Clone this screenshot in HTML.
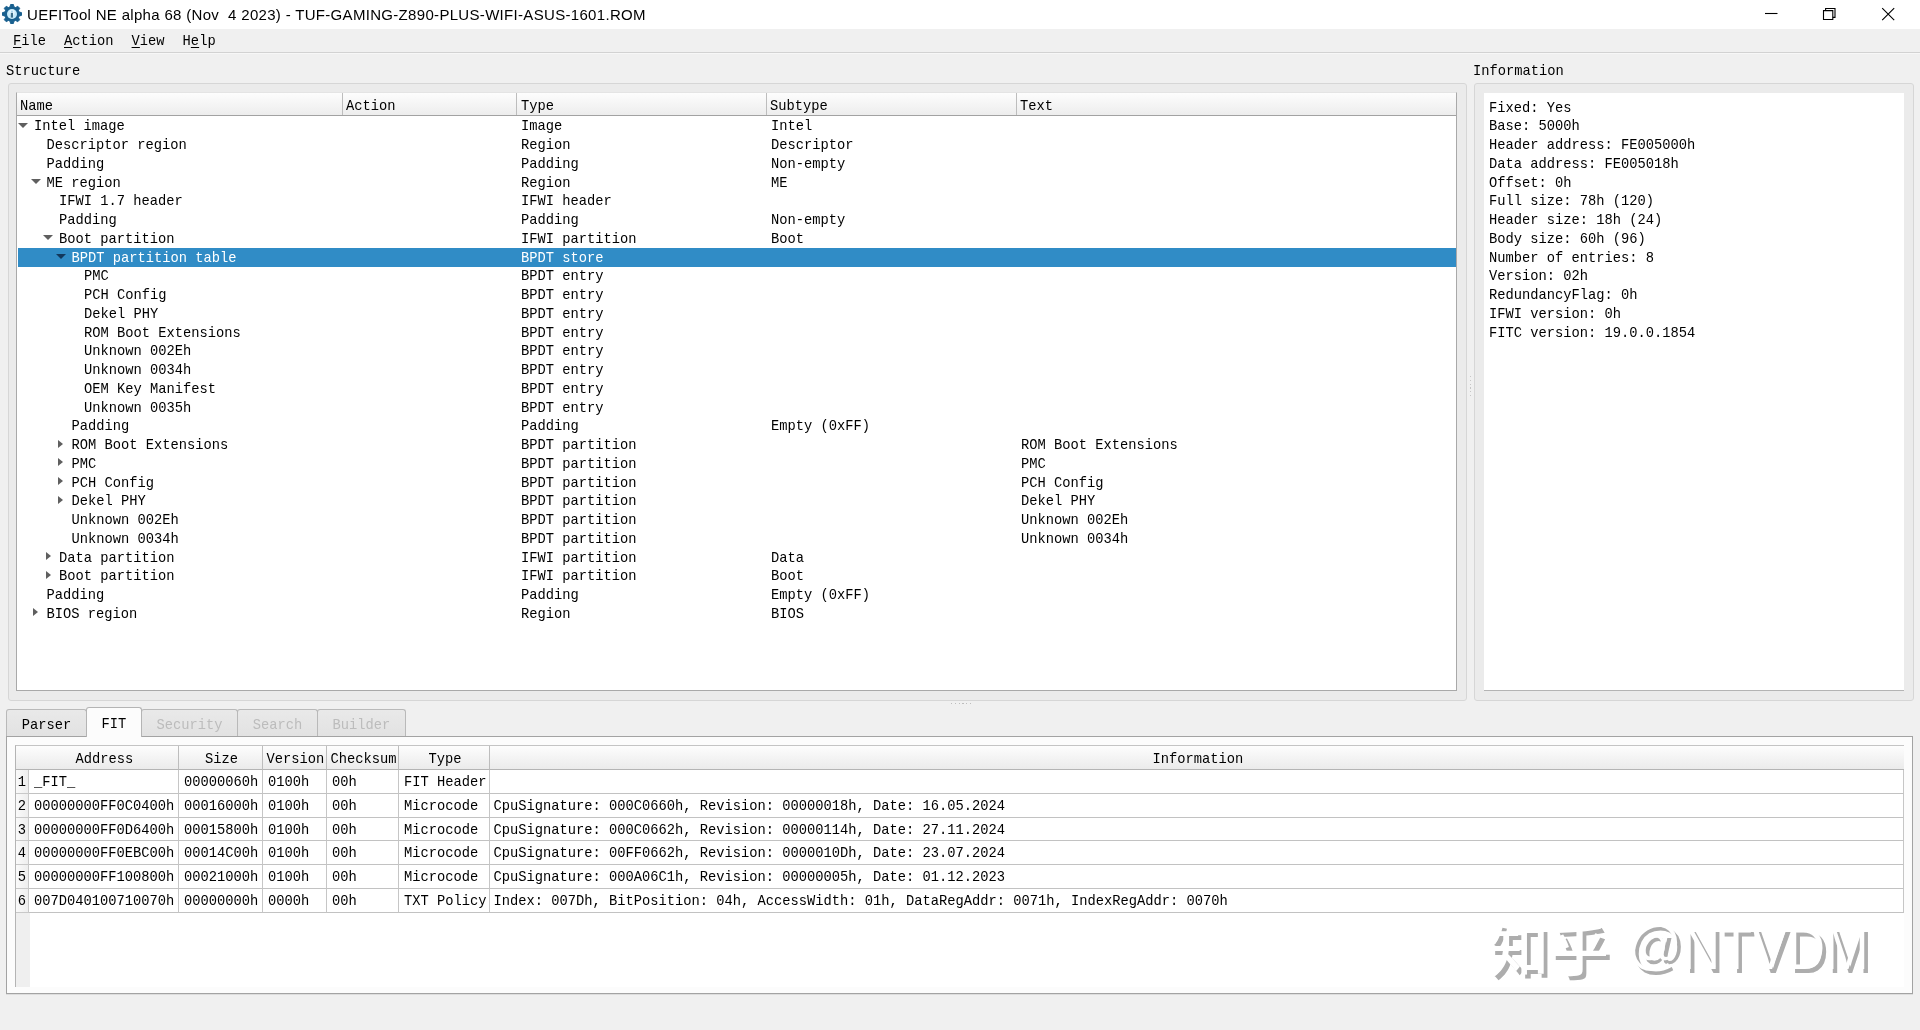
<!DOCTYPE html>
<html lang="en"><head><meta charset="utf-8">
<title>UEFITool NE alpha 68 (Nov  4 2023) - TUF-GAMING-Z890-PLUS-WIFI-ASUS-1601.ROM</title>
<style>
html,body{margin:0;padding:0}
body{width:1920px;height:1030px;overflow:hidden;background:#f0f0f0;position:relative;
 font-family:"Liberation Mono","DejaVu Sans Mono",monospace;font-size:13.75px;color:#000;}
div,span{box-sizing:border-box}
.abs,.abs>*{position:absolute}
.t{position:absolute;white-space:pre;line-height:18.75px;height:18.75px}
#titlebar{position:absolute;left:0;top:0;width:1920px;height:29px;background:#fff}
#title{position:absolute;left:27px;top:0;height:29px;line-height:29px;white-space:pre;
 font-family:"Liberation Sans",sans-serif;font-size:15px;color:#000;letter-spacing:0.315px}
#menubar{position:absolute;left:0;top:29px;width:1920px;height:24px;background:#f0f0f0;border-bottom:1px solid #d2d2d2;box-shadow:0 1px 0 #f7f7f7}
#menubar span{position:absolute;top:3px;line-height:20px;white-space:pre}
#menubar u{text-decoration:underline;text-underline-offset:2px}
.gb{position:absolute;border:1px solid #d6d6d6;border-radius:3px;background:#ebebeb}
.lbl{position:absolute;white-space:pre;line-height:18px}
#tree{position:absolute;left:16px;top:92px;width:1441px;height:599px;background:#fff;border:1px solid #a9a9a9;border-top-color:#e4e4e4}
#thead{position:absolute;left:17px;top:93px;width:1439px;height:23px;
 background:linear-gradient(#fdfdfd,#ededed);border-bottom:1px solid #a2a2a2}
.hs{position:absolute;top:93px;width:1px;height:22px;background:#bdbdbd}
.sel{position:absolute;background:#308cc6}
.w{color:#fff}
.arr{position:absolute;width:0;height:0}
.open{border-left:5.1px solid transparent;border-right:5.1px solid transparent;border-top:5.6px solid #5f5f5f}
.closed{border-top:4.8px solid transparent;border-bottom:4.8px solid transparent;border-left:5.7px solid #5f5f5f}
#info{position:absolute;left:1483.5px;top:93px;width:420px;height:598px;background:#fff;border-bottom:1px solid #b4b4b4}
.tab{position:absolute;top:709px;height:27px;border:1px solid #b9b9b9;border-bottom:none;border-radius:3px 3px 0 0;
 background:linear-gradient(#e9e9e9,#e2e2e2);line-height:31px;white-space:pre;text-align:center}
.tab.dis{color:#bcbcbc}
.tab.act{top:707px;height:30px;background:#fcfcfc;border-color:#b4b4b4;line-height:34px;z-index:3}
#pane{position:absolute;left:6px;top:736px;width:1907px;height:258px;background:#fcfcfc;border:1px solid #a3a3a3;box-shadow:0 1px 0 rgba(0,0,0,.08)}
#tbl{position:absolute;left:15px;top:745px;width:1889px;height:242px;background:#fff;border:1px solid #b4b4b4;border-top-color:#c4c4c4;border-right:none;border-bottom:none}
.th{position:absolute;top:746px;height:24px;background:linear-gradient(#fdfdfd,#ebebeb);border-right:1px solid #bdbdbd;border-bottom:1px solid #b4b4b4;
 line-height:27px;text-align:center;white-space:pre;padding-left:2px}
.vh{position:absolute;left:16px;width:13px;background:linear-gradient(90deg,#fafafa,#eeeeee);border-right:1px solid #c8c8c8;border-bottom:1px solid #c8c8c8;text-align:center;white-space:pre}
.c{position:absolute;white-space:pre;border-right:1px solid #c6c6c6;border-bottom:1px solid #c2c2c2;padding-left:5px}
.c.a{padding-left:5px}
</style></head><body>
<div id="root" style="position:absolute;left:0;top:0;width:1920px;height:1030px;overflow:hidden;will-change:transform">

<div id="titlebar">
<svg style="position:absolute;left:0.9px;top:2.8px" width="22" height="22" viewBox="-11 -11 22 22">
<path d="M-1.92 -7.15 L-1.42 -9.49 L1.42 -9.49 L1.92 -7.15 L3.70 -6.41 L5.71 -7.72 L7.72 -5.71 L6.41 -3.70 L7.15 -1.92 L9.49 -1.42 L9.49 1.42 L7.15 1.92 L6.41 3.70 L7.72 5.71 L5.71 7.72 L3.70 6.41 L1.92 7.15 L1.42 9.49 L-1.42 9.49 L-1.92 7.15 L-3.70 6.41 L-5.71 7.72 L-7.72 5.71 L-6.41 3.70 L-7.15 1.92 L-9.49 1.42 L-9.49 -1.42 L-7.15 -1.92 L-6.41 -3.70 L-7.72 -5.71 L-5.71 -7.72 L-3.70 -6.41Z" fill="#19608f" stroke="#19608f" stroke-width="1" stroke-linejoin="round"/>
<circle r="5" fill="#c9ecfb"/><circle cx="0" cy="-1.6" r="2.6" fill="#e6f7ff"/>
<path d="M-1.2 -1.2H1V3.6H-1.2Z" fill="#3d6f8a"/><circle cx="0" cy="-2.6" r="0.9" fill="#9fd0ea"/>
</svg>
<div id="title">UEFITool NE alpha 68 (Nov  4 2023) - TUF-GAMING-Z890-PLUS-WIFI-ASUS-1601.ROM</div>
<svg style="position:absolute;left:1760px;top:0" width="160" height="29" viewBox="0 0 160 29" fill="none" stroke="#000" stroke-width="1.1">
<path d="M5 13.5H17.5"/>
<path d="M63.5 10.6H72.8V19.5H63.5Z"/><path d="M65.6 10.6V8.5H75V17.4H72.8"/>
<path d="M122.2 8.2L134.2 20.2M134.2 8.2L122.2 20.2"/>
</svg>
</div>
<div id="menubar">
<span style="left:13px"><u>F</u>ile</span>
<span style="left:64px"><u>A</u>ction</span>
<span style="left:131.6px"><u>V</u>iew</span>
<span style="left:182.6px">H<u>e</u>lp</span>
</div>
<div class="lbl" style="left:6px;top:63px">Structure</div>
<div class="gb" style="left:8px;top:83px;width:1459px;height:618px"></div>
<div id="tree"></div><div id="thead"></div>
<div class="hs" style="left:342px"></div>
<div class="hs" style="left:516px"></div>
<div class="hs" style="left:766px"></div>
<div class="hs" style="left:1016px"></div>
<div class="t" style="left:20px;top:97.5px">Name</div>
<div class="t" style="left:346px;top:97.5px">Action</div>
<div class="t" style="left:521px;top:97.5px">Type</div>
<div class="t" style="left:770px;top:97.5px">Subtype</div>
<div class="t" style="left:1020px;top:97.5px">Text</div>
<div class="arr open" style="left:18.2px;top:122.70px;border-top-color:#5f5f5f"></div>
<div class="t" style="left:34.0px;top:118.30px">Intel image</div>
<div class="t" style="left:521px;top:118.30px">Image</div>
<div class="t" style="left:771px;top:118.30px">Intel</div>
<div class="t" style="left:46.5px;top:137.05px">Descriptor region</div>
<div class="t" style="left:521px;top:137.05px">Region</div>
<div class="t" style="left:771px;top:137.05px">Descriptor</div>
<div class="t" style="left:46.5px;top:155.80px">Padding</div>
<div class="t" style="left:521px;top:155.80px">Padding</div>
<div class="t" style="left:771px;top:155.80px">Non-empty</div>
<div class="arr open" style="left:30.7px;top:178.95px;border-top-color:#5f5f5f"></div>
<div class="t" style="left:46.5px;top:174.55px">ME region</div>
<div class="t" style="left:521px;top:174.55px">Region</div>
<div class="t" style="left:771px;top:174.55px">ME</div>
<div class="t" style="left:59.0px;top:193.30px">IFWI 1.7 header</div>
<div class="t" style="left:521px;top:193.30px">IFWI header</div>
<div class="t" style="left:59.0px;top:212.05px">Padding</div>
<div class="t" style="left:521px;top:212.05px">Padding</div>
<div class="t" style="left:771px;top:212.05px">Non-empty</div>
<div class="arr open" style="left:43.2px;top:235.20px;border-top-color:#5f5f5f"></div>
<div class="t" style="left:59.0px;top:230.80px">Boot partition</div>
<div class="t" style="left:521px;top:230.80px">IFWI partition</div>
<div class="t" style="left:771px;top:230.80px">Boot</div>
<div class="sel" style="left:18px;top:247.75px;width:1438px;height:18.75px"></div>
<div class="arr open" style="left:55.7px;top:253.95px;border-top-color:#12385c"></div>
<div class="t w" style="left:71.5px;top:249.55px">BPDT partition table</div>
<div class="t w" style="left:521px;top:249.55px">BPDT store</div>
<div class="t" style="left:84.0px;top:268.30px">PMC</div>
<div class="t" style="left:521px;top:268.30px">BPDT entry</div>
<div class="t" style="left:84.0px;top:287.05px">PCH Config</div>
<div class="t" style="left:521px;top:287.05px">BPDT entry</div>
<div class="t" style="left:84.0px;top:305.80px">Dekel PHY</div>
<div class="t" style="left:521px;top:305.80px">BPDT entry</div>
<div class="t" style="left:84.0px;top:324.55px">ROM Boot Extensions</div>
<div class="t" style="left:521px;top:324.55px">BPDT entry</div>
<div class="t" style="left:84.0px;top:343.30px">Unknown 002Eh</div>
<div class="t" style="left:521px;top:343.30px">BPDT entry</div>
<div class="t" style="left:84.0px;top:362.05px">Unknown 0034h</div>
<div class="t" style="left:521px;top:362.05px">BPDT entry</div>
<div class="t" style="left:84.0px;top:380.80px">OEM Key Manifest</div>
<div class="t" style="left:521px;top:380.80px">BPDT entry</div>
<div class="t" style="left:84.0px;top:399.55px">Unknown 0035h</div>
<div class="t" style="left:521px;top:399.55px">BPDT entry</div>
<div class="t" style="left:71.5px;top:418.30px">Padding</div>
<div class="t" style="left:521px;top:418.30px">Padding</div>
<div class="t" style="left:771px;top:418.30px">Empty (0xFF)</div>
<div class="arr closed" style="left:58.1px;top:439.65px;border-left-color:#5f5f5f"></div>
<div class="t" style="left:71.5px;top:437.05px">ROM Boot Extensions</div>
<div class="t" style="left:521px;top:437.05px">BPDT partition</div>
<div class="t" style="left:1021px;top:437.05px">ROM Boot Extensions</div>
<div class="arr closed" style="left:58.1px;top:458.40px;border-left-color:#5f5f5f"></div>
<div class="t" style="left:71.5px;top:455.80px">PMC</div>
<div class="t" style="left:521px;top:455.80px">BPDT partition</div>
<div class="t" style="left:1021px;top:455.80px">PMC</div>
<div class="arr closed" style="left:58.1px;top:477.15px;border-left-color:#5f5f5f"></div>
<div class="t" style="left:71.5px;top:474.55px">PCH Config</div>
<div class="t" style="left:521px;top:474.55px">BPDT partition</div>
<div class="t" style="left:1021px;top:474.55px">PCH Config</div>
<div class="arr closed" style="left:58.1px;top:495.90px;border-left-color:#5f5f5f"></div>
<div class="t" style="left:71.5px;top:493.30px">Dekel PHY</div>
<div class="t" style="left:521px;top:493.30px">BPDT partition</div>
<div class="t" style="left:1021px;top:493.30px">Dekel PHY</div>
<div class="t" style="left:71.5px;top:512.05px">Unknown 002Eh</div>
<div class="t" style="left:521px;top:512.05px">BPDT partition</div>
<div class="t" style="left:1021px;top:512.05px">Unknown 002Eh</div>
<div class="t" style="left:71.5px;top:530.80px">Unknown 0034h</div>
<div class="t" style="left:521px;top:530.80px">BPDT partition</div>
<div class="t" style="left:1021px;top:530.80px">Unknown 0034h</div>
<div class="arr closed" style="left:45.6px;top:552.15px;border-left-color:#5f5f5f"></div>
<div class="t" style="left:59.0px;top:549.55px">Data partition</div>
<div class="t" style="left:521px;top:549.55px">IFWI partition</div>
<div class="t" style="left:771px;top:549.55px">Data</div>
<div class="arr closed" style="left:45.6px;top:570.90px;border-left-color:#5f5f5f"></div>
<div class="t" style="left:59.0px;top:568.30px">Boot partition</div>
<div class="t" style="left:521px;top:568.30px">IFWI partition</div>
<div class="t" style="left:771px;top:568.30px">Boot</div>
<div class="t" style="left:46.5px;top:587.05px">Padding</div>
<div class="t" style="left:521px;top:587.05px">Padding</div>
<div class="t" style="left:771px;top:587.05px">Empty (0xFF)</div>
<div class="arr closed" style="left:33.1px;top:608.40px;border-left-color:#5f5f5f"></div>
<div class="t" style="left:46.5px;top:605.80px">BIOS region</div>
<div class="t" style="left:521px;top:605.80px">Region</div>
<div class="t" style="left:771px;top:605.80px">BIOS</div>
<div class="lbl" style="left:1473px;top:63px">Information</div>
<div class="gb" style="left:1474px;top:83px;width:440px;height:618px"></div>
<div id="info"></div>
<div class="t" style="left:1489px;top:99.50px">Fixed: Yes</div>
<div class="t" style="left:1489px;top:118.25px">Base: 5000h</div>
<div class="t" style="left:1489px;top:137.00px">Header address: FE005000h</div>
<div class="t" style="left:1489px;top:155.75px">Data address: FE005018h</div>
<div class="t" style="left:1489px;top:174.50px">Offset: 0h</div>
<div class="t" style="left:1489px;top:193.25px">Full size: 78h (120)</div>
<div class="t" style="left:1489px;top:212.00px">Header size: 18h (24)</div>
<div class="t" style="left:1489px;top:230.75px">Body size: 60h (96)</div>
<div class="t" style="left:1489px;top:249.50px">Number of entries: 8</div>
<div class="t" style="left:1489px;top:268.25px">Version: 02h</div>
<div class="t" style="left:1489px;top:287.00px">RedundancyFlag: 0h</div>
<div class="t" style="left:1489px;top:305.75px">IFWI version: 0h</div>
<div class="t" style="left:1489px;top:324.50px">FITC version: 19.0.0.1854</div>
<div style="position:absolute;left:951.00px;top:703px;width:1.3px;height:1.3px;background:#bdbdbd"></div>
<div style="position:absolute;left:954.75px;top:703px;width:1.3px;height:1.3px;background:#bdbdbd"></div>
<div style="position:absolute;left:958.50px;top:703px;width:1.3px;height:1.3px;background:#bdbdbd"></div>
<div style="position:absolute;left:962.25px;top:703px;width:1.3px;height:1.3px;background:#bdbdbd"></div>
<div style="position:absolute;left:966.00px;top:703px;width:1.3px;height:1.3px;background:#bdbdbd"></div>
<div style="position:absolute;left:969.75px;top:703px;width:1.3px;height:1.3px;background:#bdbdbd"></div>
<div style="position:absolute;left:1469.6px;top:376.00px;width:1.3px;height:1.3px;background:#c6c6c6"></div>
<div style="position:absolute;left:1469.6px;top:379.75px;width:1.3px;height:1.3px;background:#c6c6c6"></div>
<div style="position:absolute;left:1469.6px;top:383.50px;width:1.3px;height:1.3px;background:#c6c6c6"></div>
<div style="position:absolute;left:1469.6px;top:387.25px;width:1.3px;height:1.3px;background:#c6c6c6"></div>
<div style="position:absolute;left:1469.6px;top:391.00px;width:1.3px;height:1.3px;background:#c6c6c6"></div>
<div style="position:absolute;left:1469.6px;top:394.75px;width:1.3px;height:1.3px;background:#c6c6c6"></div>

<div id="pane"></div>
<div class="tab " style="left:6px;width:81px">Parser</div>
<div class="tab dis" style="left:141px;width:97px">Security</div>
<div class="tab dis" style="left:237px;width:81px">Search</div>
<div class="tab dis" style="left:317px;width:89px">Builder</div>
<div class="tab act" style="left:86px;width:56px">FIT</div>
<div id="tbl"></div>
<div class="th" style="left:16px;width:13px;border-right:none"></div>
<div class="th" style="left:29px;width:150px">Address</div>
<div class="th" style="left:179px;width:84px">Size</div>
<div class="th" style="left:263px;width:64px">Version</div>
<div class="th" style="left:327px;width:72px">Checksum</div>
<div class="th" style="left:399px;width:91px">Type</div>
<div class="th" style="left:490px;width:1414px;border-right:none">Information</div>
<div class="vh" style="top:770.05px;height:23.75px;line-height:26.25px">1</div>
<div class="c a" style="left:29px;top:770.05px;width:150px;height:23.75px;line-height:25.15px">_FIT_</div>
<div class="c" style="left:179px;top:770.05px;width:84px;height:23.75px;line-height:25.15px">00000060h</div>
<div class="c" style="left:263px;top:770.05px;width:64px;height:23.75px;line-height:25.15px">0100h</div>
<div class="c" style="left:327px;top:770.05px;width:72px;height:23.75px;line-height:25.15px">00h</div>
<div class="c" style="left:399px;top:770.05px;width:91px;height:23.75px;line-height:25.15px">FIT Header</div>
<div class="c" style="left:490px;top:770.05px;width:1414px;height:23.75px;line-height:25.15px;padding-left:3.5px"></div>
<div class="vh" style="top:793.80px;height:23.75px;line-height:26.25px">2</div>
<div class="c a" style="left:29px;top:793.80px;width:150px;height:23.75px;line-height:25.15px">00000000FF0C0400h</div>
<div class="c" style="left:179px;top:793.80px;width:84px;height:23.75px;line-height:25.15px">00016000h</div>
<div class="c" style="left:263px;top:793.80px;width:64px;height:23.75px;line-height:25.15px">0100h</div>
<div class="c" style="left:327px;top:793.80px;width:72px;height:23.75px;line-height:25.15px">00h</div>
<div class="c" style="left:399px;top:793.80px;width:91px;height:23.75px;line-height:25.15px">Microcode</div>
<div class="c" style="left:490px;top:793.80px;width:1414px;height:23.75px;line-height:25.15px;padding-left:3.5px">CpuSignature: 000C0660h, Revision: 00000018h, Date: 16.05.2024</div>
<div class="vh" style="top:817.55px;height:23.75px;line-height:26.25px">3</div>
<div class="c a" style="left:29px;top:817.55px;width:150px;height:23.75px;line-height:25.15px">00000000FF0D6400h</div>
<div class="c" style="left:179px;top:817.55px;width:84px;height:23.75px;line-height:25.15px">00015800h</div>
<div class="c" style="left:263px;top:817.55px;width:64px;height:23.75px;line-height:25.15px">0100h</div>
<div class="c" style="left:327px;top:817.55px;width:72px;height:23.75px;line-height:25.15px">00h</div>
<div class="c" style="left:399px;top:817.55px;width:91px;height:23.75px;line-height:25.15px">Microcode</div>
<div class="c" style="left:490px;top:817.55px;width:1414px;height:23.75px;line-height:25.15px;padding-left:3.5px">CpuSignature: 000C0662h, Revision: 00000114h, Date: 27.11.2024</div>
<div class="vh" style="top:841.30px;height:23.75px;line-height:26.25px">4</div>
<div class="c a" style="left:29px;top:841.30px;width:150px;height:23.75px;line-height:25.15px">00000000FF0EBC00h</div>
<div class="c" style="left:179px;top:841.30px;width:84px;height:23.75px;line-height:25.15px">00014C00h</div>
<div class="c" style="left:263px;top:841.30px;width:64px;height:23.75px;line-height:25.15px">0100h</div>
<div class="c" style="left:327px;top:841.30px;width:72px;height:23.75px;line-height:25.15px">00h</div>
<div class="c" style="left:399px;top:841.30px;width:91px;height:23.75px;line-height:25.15px">Microcode</div>
<div class="c" style="left:490px;top:841.30px;width:1414px;height:23.75px;line-height:25.15px;padding-left:3.5px">CpuSignature: 00FF0662h, Revision: 0000010Dh, Date: 23.07.2024</div>
<div class="vh" style="top:865.05px;height:23.75px;line-height:26.25px">5</div>
<div class="c a" style="left:29px;top:865.05px;width:150px;height:23.75px;line-height:25.15px">00000000FF100800h</div>
<div class="c" style="left:179px;top:865.05px;width:84px;height:23.75px;line-height:25.15px">00021000h</div>
<div class="c" style="left:263px;top:865.05px;width:64px;height:23.75px;line-height:25.15px">0100h</div>
<div class="c" style="left:327px;top:865.05px;width:72px;height:23.75px;line-height:25.15px">00h</div>
<div class="c" style="left:399px;top:865.05px;width:91px;height:23.75px;line-height:25.15px">Microcode</div>
<div class="c" style="left:490px;top:865.05px;width:1414px;height:23.75px;line-height:25.15px;padding-left:3.5px">CpuSignature: 000A06C1h, Revision: 00000005h, Date: 01.12.2023</div>
<div class="vh" style="top:888.80px;height:23.75px;line-height:26.25px">6</div>
<div class="c a" style="left:29px;top:888.80px;width:150px;height:23.75px;line-height:25.15px">007D040100710070h</div>
<div class="c" style="left:179px;top:888.80px;width:84px;height:23.75px;line-height:25.15px">00000000h</div>
<div class="c" style="left:263px;top:888.80px;width:64px;height:23.75px;line-height:25.15px">0000h</div>
<div class="c" style="left:327px;top:888.80px;width:72px;height:23.75px;line-height:25.15px">00h</div>
<div class="c" style="left:399px;top:888.80px;width:91px;height:23.75px;line-height:25.15px">TXT Policy</div>
<div class="c" style="left:490px;top:888.80px;width:1414px;height:23.75px;line-height:25.15px;padding-left:3.5px">Index: 007Dh, BitPosition: 04h, AccessWidth: 01h, DataRegAddr: 0071h, IndexRegAddr: 0070h</div>
<div class="vh" style="top:912.55px;height:74.45px;border-bottom:none;border-right:none;width:14px;background:#efefef"></div>
<div style="position:absolute;left:1488.5px;top:914px;white-space:pre;font-family:'Liberation Sans','Noto Sans CJK SC',sans-serif;font-weight:500;font-size:55.2px;line-height:76px;color:#fff;text-shadow:3.5px 3.75px 0 #adadad;transform-origin:0 0;transform:scaleX(1.085)">知乎</div>
<div style="position:absolute;left:1627px;top:906px;white-space:pre;font-family:'Liberation Sans',sans-serif;font-size:55.3px;line-height:76px;color:#fff;text-shadow:3.8px 3.95px 0 #adadad;transform-origin:0 0;transform:scaleX(0.976)">@</div>
<div style="position:absolute;left:1681.8px;top:910.5px;white-space:pre;font-family:'Liberation Sans',sans-serif;font-size:58.5px;line-height:76px;color:#fff;text-shadow:4.1px 3.75px 0 #adadad;transform-origin:0 0;transform:scaleX(0.897)">NTVDM</div>
</div>
</body></html>
